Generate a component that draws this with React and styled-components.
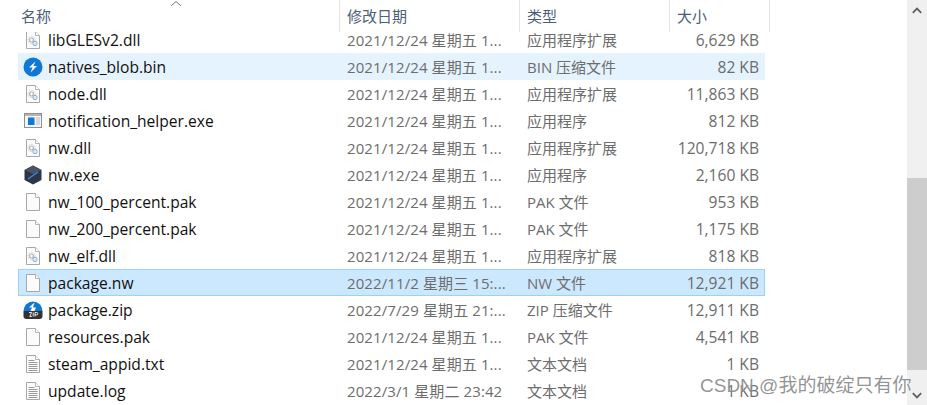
import styled, { createGlobalStyle } from "styled-components";

const GlobalStyle = createGlobalStyle`
  html, body {
    margin: 0;
    padding: 0;
    background: #fff;
    overflow: hidden;
  }
`;

const Window = styled.div`
  position: relative;
  display: flex;
  width: 927px;
  height: 405px;
  overflow: hidden;
  font-family: "Open Sans", "Noto Sans CJK SC", sans-serif;
  font-size: 15px;
`;

const Main = styled.div`
  flex: 1;
  display: flex;
  flex-direction: column;
  min-width: 0;
`;

const Header = styled.div`
  position: relative;
  display: grid;
  grid-template-columns: 322px 180px 150px 100px;
  height: 32px;
  margin-left: 18px;
  flex: none;
  background: #fff;
  z-index: 1;
`;

const HeaderCell = styled.div`
  display: flex;
  align-items: center;
  padding-left: ${(p) => (p.$first ? "3px" : "7px")};
  border-right: 1px solid #e5e5e5;
  color: #4c607a;
  font-size: 15px;
  line-height: 1;
`;

const SortArrow = styled.svg`
  position: absolute;
  left: 152px;
  top: 0;
  width: 12px;
  height: 7px;
`;

const ScrollView = styled.div`
  flex: 1;
  overflow: hidden;
`;

const List = styled.div`
  margin: -6px 0 0 18px;
  width: 747px;
`;

const Row = styled.div`
  display: grid;
  grid-template-columns: 321px 180px 150px 94px;
  height: 27px;
  box-sizing: border-box;
  align-items: center;
  border: 1px solid ${(p) => (p.$selected ? "#99d1ff" : p.$hover ? "#e5f3ff" : "transparent")};
  background: ${(p) => (p.$selected ? "#cce8ff" : p.$hover ? "#e5f3ff" : "transparent")};
`;

const NameCell = styled.div`
  display: flex;
  align-items: center;
  gap: 5px;
  padding-left: 4px;
  color: #111;
  font-size: 15.6px;
`;

const IconBox = styled.svg`
  width: 20px;
  height: 20px;
  flex: none;
`;

const InfoCell = styled.div`
  color: #6d6d6d;
  white-space: nowrap;
  padding-left: 7px;
  letter-spacing: ${(p) => (p.$date ? "0.1px" : "0")};
`;

const SizeCell = styled.div`
  color: #6d6d6d;
  font-size: 15.6px;
  text-align: right;
  padding-right: 5px;
  white-space: nowrap;
`;

const ScrollBar = styled.div`
  flex: none;
  width: 20px;
  height: 405px;
  background: #f0f0f0;
  display: flex;
  flex-direction: column;
  align-items: center;
`;

const ArrowButton = styled.div`
  flex: none;
  height: 20px;
  display: flex;
  align-items: center;
  justify-content: center;
`;

const Track = styled.div`
  flex: 1;
  width: 100%;
  display: flex;
  flex-direction: column;
  justify-content: flex-end;
  padding-bottom: 15px;
`;

const Thumb = styled.div`
  height: 192px;
  background: #cdcdcd;
`;

const Watermark = styled.div`
  position: absolute;
  left: 700px;
  top: 374px;
  color: rgba(105, 105, 105, 0.72);
  font-family: "Liberation Sans", "Noto Sans CJK SC", sans-serif;
  font-size: 19px;
  line-height: 24px;
  white-space: nowrap;
  text-shadow: 0 0 1px rgba(255, 255, 255, 0.8);
`;

const Page = () => (
  <g>
    <path d="M3.5 1.5h9l4 4v13h-13z" fill="#fbfbfb" stroke="#a8a8a8" />
    <path d="M12.5 1.5v4h4" fill="#fff" stroke="#b5b5b5" />
  </g>
);

const DllIcon = () => (
  <IconBox viewBox="0 0 20 20">
    <Page />
    <circle cx="8.5" cy="10" r="2" fill="none" stroke="#b0b0b0" strokeWidth="1.2" />
    <circle cx="8.5" cy="10" r="3.6" fill="none" stroke="#c8c8c8" strokeWidth="1" strokeDasharray="1.5 1.2" />
    <circle cx="12" cy="13.5" r="2.2" fill="#d6e8f6" stroke="#8db4d4" />
  </IconBox>
);

const FileIcon = () => (
  <IconBox viewBox="0 0 20 20">
    <Page />
  </IconBox>
);

const TextIcon = () => (
  <IconBox viewBox="0 0 20 20">
    <Page />
    <path d="M5.5 6.5h6M5.5 8.5h9M5.5 10.5h9M5.5 12.5h9M5.5 14.5h9M5.5 16.5h9" stroke="#9a9a9a" />
  </IconBox>
);

const BoltIcon = () => (
  <IconBox viewBox="0 0 20 20">
    <circle cx="10" cy="10" r="9.5" fill="#0f78d4" />
    <path d="M12.5 4.5 6 10.5h3.6L7.5 15.5l6.5-6.5h-3.6z" fill="#fff" />
  </IconBox>
);

const ZipIcon = () => (
  <IconBox viewBox="0 0 20 20">
    <path d="M0.5 11a9.5 9.5 0 0 1 19 0z" fill="#0f78d4" />
    <path d="M11.5 2.5 6 7.5h3L7.5 11h4l1.5-3.5h-3z" fill="#fff" />
    <path d="M0.5 11h19v5a3 3 0 0 1-3 3h-13a3 3 0 0 1-3-3z" fill="#333" />
    <path d="M6 12.5h2.6L6.8 16.5h2M10.2 12.5v4M12 16.5v-4h1.6a1.1 1.1 0 0 1 0 2.4H12" fill="none" stroke="#fff" strokeWidth="0.9" />
  </IconBox>
);

const AppIcon = () => (
  <IconBox viewBox="0 0 20 20">
    <rect x="1.5" y="2.5" width="17" height="14" fill="#f4f4f4" stroke="#8f8f8f" />
    <rect x="2" y="3" width="16" height="2" fill="#b5b5b5" />
    <rect x="5" y="6.5" width="6.5" height="7.5" fill="#0f78d4" />
    <path d="M13 7h4M13 9h4M13 11h4M13 13h4" stroke="#bdbdbd" />
  </IconBox>
);

const NwIcon = () => (
  <IconBox viewBox="0 0 20 20">
    <path d="M10 0.5 18.5 5v10L10 19.5 1.5 15V5z" fill="#2e3645" />
    <path d="M10 0.5 18.5 5 10 9 1.5 5z" fill="#4a5364" />
    <path d="M5 14 15 7" stroke="#2f8fe8" strokeWidth="1.3" />
  </IconBox>
);

const DLL = "应用程序扩展";
const D = "2021/12/24 星期五 1...";

const files = [
  { name: "libGLESv2.dll", icon: DllIcon, date: D, type: DLL, size: "6,629 KB" },
  { name: "natives_blob.bin", icon: BoltIcon, date: D, type: "BIN 压缩文件", size: "82 KB", hover: true },
  { name: "node.dll", icon: DllIcon, date: D, type: DLL, size: "11,863 KB" },
  { name: "notification_helper.exe", icon: AppIcon, date: D, type: "应用程序", size: "812 KB" },
  { name: "nw.dll", icon: DllIcon, date: D, type: DLL, size: "120,718 KB" },
  { name: "nw.exe", icon: NwIcon, date: D, type: "应用程序", size: "2,160 KB" },
  { name: "nw_100_percent.pak", icon: FileIcon, date: D, type: "PAK 文件", size: "953 KB" },
  { name: "nw_200_percent.pak", icon: FileIcon, date: D, type: "PAK 文件", size: "1,175 KB" },
  { name: "nw_elf.dll", icon: DllIcon, date: D, type: DLL, size: "818 KB" },
  { name: "package.nw", icon: FileIcon, date: "2022/11/2 星期三 15:...", type: "NW 文件", size: "12,921 KB", selected: true },
  { name: "package.zip", icon: ZipIcon, date: "2022/7/29 星期五 21:...", type: "ZIP 压缩文件", size: "12,911 KB" },
  { name: "resources.pak", icon: FileIcon, date: D, type: "PAK 文件", size: "4,541 KB" },
  { name: "steam_appid.txt", icon: TextIcon, date: D, type: "文本文档", size: "1 KB" },
  { name: "update.log", icon: TextIcon, date: "2022/3/1 星期二 23:42", type: "文本文档", size: "1 KB" },
];

const App = () => (
  <Window>
    <GlobalStyle />
    <Main>
      <Header>
        <HeaderCell $first>名称</HeaderCell>
        <HeaderCell>修改日期</HeaderCell>
        <HeaderCell>类型</HeaderCell>
        <HeaderCell>大小</HeaderCell>
        <SortArrow viewBox="0 0 12 7">
          <path d="M1 6 6 1.5 11 6" fill="none" stroke="#7a7a7a" />
        </SortArrow>
      </Header>
      <ScrollView>
        <List>
          {files.map((f) => (
            <Row key={f.name} $selected={f.selected} $hover={f.hover}>
              <NameCell>
                <f.icon />
                {f.name}
              </NameCell>
              <InfoCell $date>{f.date}</InfoCell>
              <InfoCell>{f.type}</InfoCell>
              <SizeCell>{f.size}</SizeCell>
            </Row>
          ))}
        </List>
      </ScrollView>
    </Main>
    <ScrollBar>
      <ArrowButton>
        <svg width="10" height="7" viewBox="0 0 10 7">
          <path d="M0.8 5.8 5 1.6 9.2 5.8" fill="none" stroke="#606060" strokeWidth="1.8" />
        </svg>
      </ArrowButton>
      <Track>
        <Thumb />
      </Track>
      <ArrowButton>
        <svg width="10" height="7" viewBox="0 0 10 7">
          <path d="M0.8 1.2 5 5.4 9.2 1.2" fill="none" stroke="#606060" strokeWidth="1.8" />
        </svg>
      </ArrowButton>
    </ScrollBar>
    <Watermark>CSDN @我的破绽只有你</Watermark>
  </Window>
);

export default App;
